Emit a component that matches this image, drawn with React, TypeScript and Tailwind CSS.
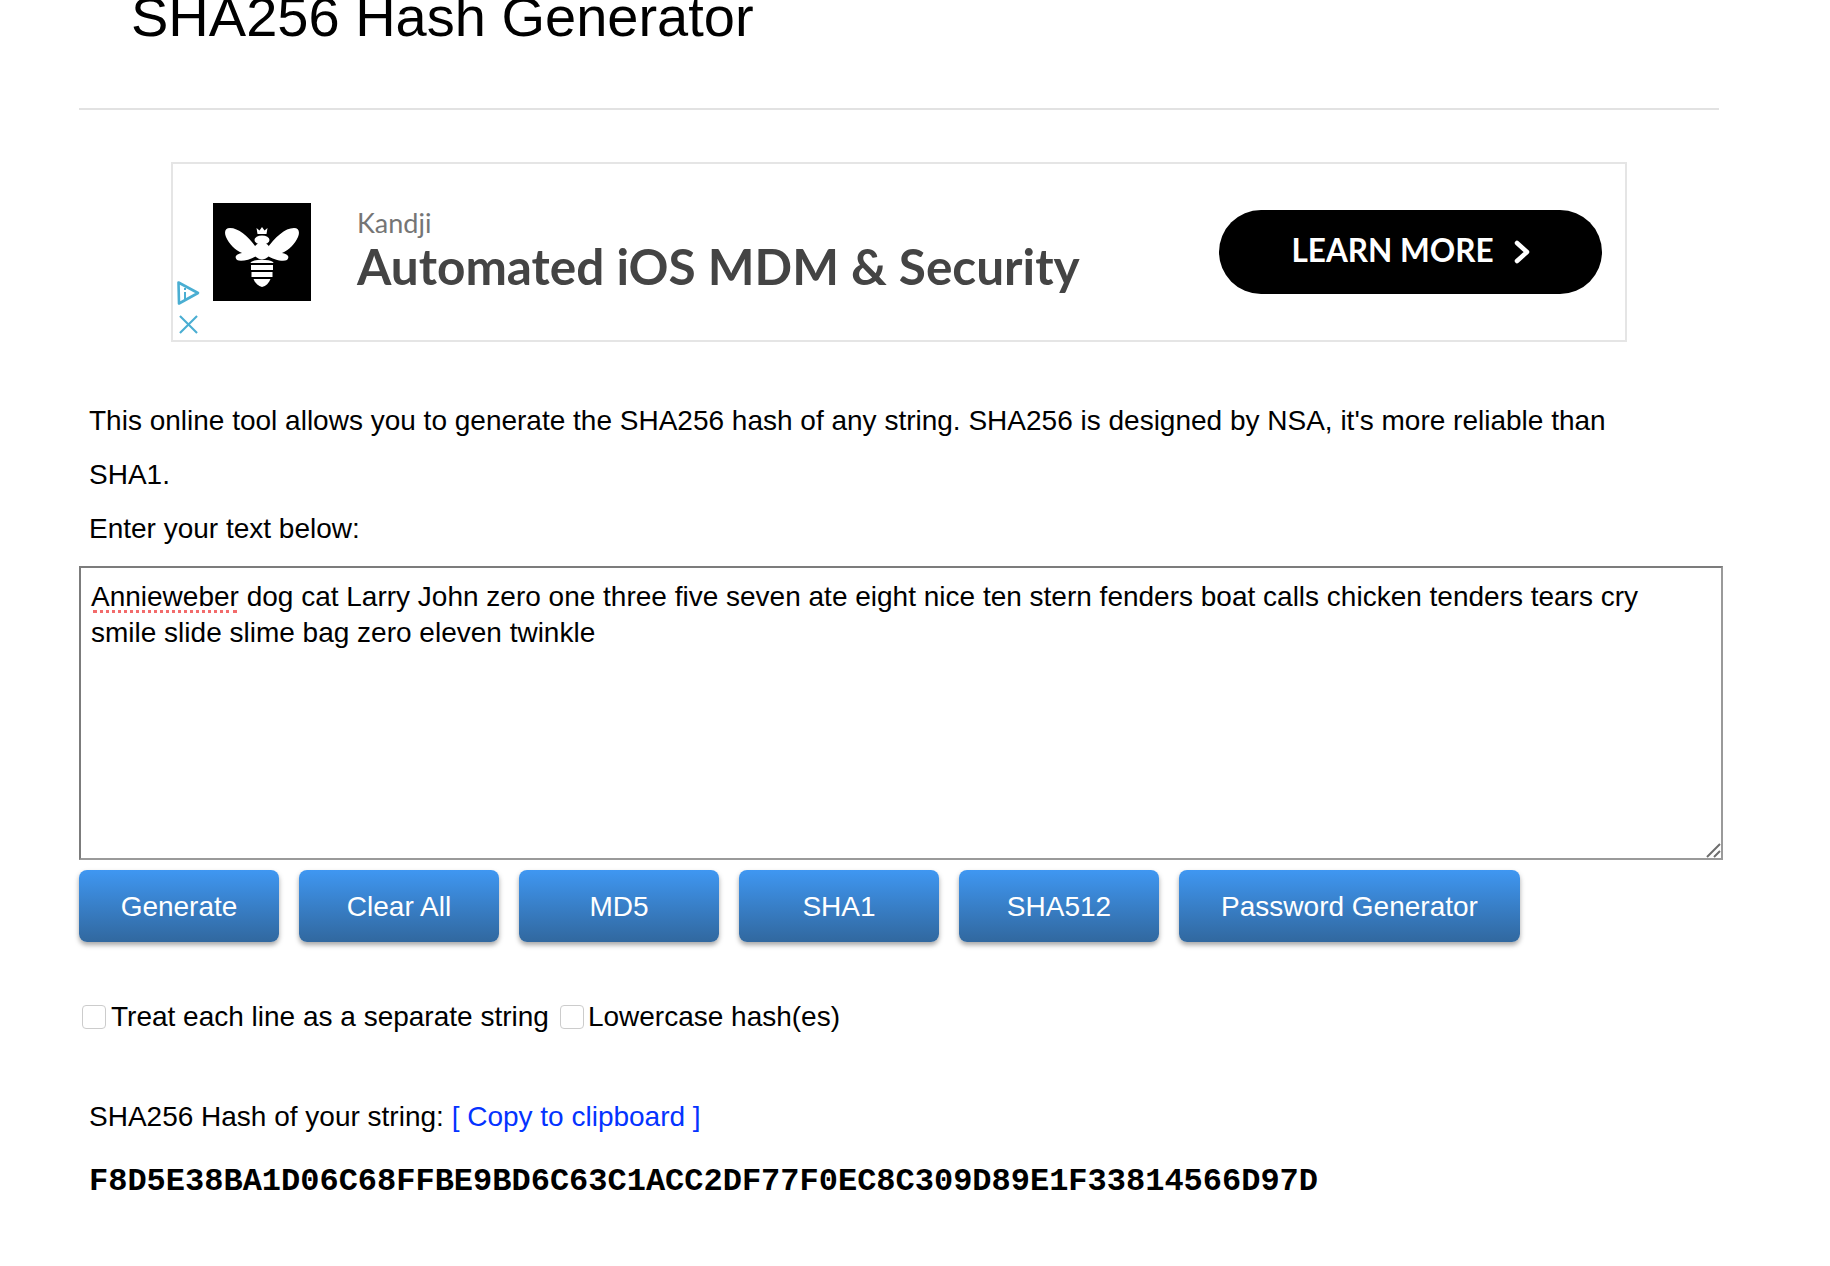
import React from 'react';

const buttons = [
  { label: 'Generate', width: 'w-[200px]' },
  { label: 'Clear All', width: 'w-[200px]' },
  { label: 'MD5', width: 'w-[200px]' },
  { label: 'SHA1', width: 'w-[200px]' },
  { label: 'SHA512', width: 'w-[200px]' },
  { label: 'Password Generator', width: 'w-[341px]' },
];

const text =
  'Annieweber dog cat Larry John zero one three five seven ate eight nice ten stern fenders boat calls chicken tenders tears cry smile slide slime bag zero eleven twinkle';

function Bee() {
  return (
    <svg viewBox="0 0 98 98" className="w-[98px] h-[98px] bg-black shrink-0">
      <g fill="#fff">
        {/* wings */}
        <path d="M45 47 C36 34 26 25 17 25 C12 25 11 29 13 34 C16 41 22 47 29 50 C23 51 21 54 24 57 C28 59 37 57 45 52 Z" />
        <path d="M53 47 C62 34 72 25 81 25 C86 25 87 29 85 34 C82 41 76 47 69 50 C75 51 77 54 74 57 C70 59 61 57 53 52 Z" />
        {/* head and crown */}
        <ellipse cx="49" cy="37" rx="7.5" ry="4.5" />
        <path d="M44.5 31 L43.5 25 L46.5 27.5 L49 24 L51.5 27.5 L54.5 25 L53.5 31 Z" />
        {/* thorax */}
        <circle cx="49" cy="48" r="8.5" />
        {/* stripes */}
        <path d="M38 59 C42 56 56 56 60 59 L60.5 60 L37.5 60 Z" />
        <rect x="38" y="62" width="22" height="5" />
        <rect x="38.5" y="69" width="21" height="5" />
        <path d="M40.5 76 L57.5 76 C56 80 53 83 49 84 C45 83 42 80 40.5 76 Z" />
      </g>
    </svg>
  );
}

function AdChoices() {
  return (
    <div className="absolute left-[3px] bottom-[6px] flex flex-col items-center gap-[9px]">
      <svg viewBox="0 0 24 26" className="w-[24px] h-[26px]" fill="none" stroke="#4aaed2" strokeWidth="2.6">
        <path d="M2.5 2.5 L22 13 L3 23.5 Z" strokeLinejoin="round" />
        <path d="M9 12 V19 M9 8 V10" strokeWidth="2" />
      </svg>
      <svg viewBox="0 0 20 20" className="w-[19px] h-[19px]" fill="none" stroke="#4aaed2" strokeWidth="2.2">
        <path d="M1 1 L19 19 M19 1 L1 19" />
      </svg>
    </div>
  );
}

export default function App() {
  return (
    <div className="w-[1830px] h-[1266px] overflow-hidden bg-white text-black font-['Liberation_Sans',Arial,sans-serif]">
      <div className="pl-[79px] w-[1723px]">
        {/* Header */}
        <h1 className="-mt-[16px] pl-[52px] text-[56px] leading-[66px] font-normal">SHA256 Hash Generator</h1>
        <hr className="mt-[58px] w-[1640px] border-t-2 border-[#e2e2e2]" />

        {/* Ad */}
        <div className="relative mt-[52px] ml-[92px] w-[1456px] h-[180px] border-2 border-[#e5e5e5] flex items-center pl-[40px] pr-[23px] bg-white">
          <Bee />
          <div className="ml-[46px] flex-1 font-['Lato',sans-serif] -mt-[3px]">
            <div className="text-[27px] leading-[30px] text-[#757575]">Kandji</div>
            <div className="text-[49.5px] leading-[56px] font-bold text-[#444444]">Automated iOS MDM &amp; Security</div>
          </div>
          <a className="w-[383px] h-[84px] rounded-full bg-black text-white flex items-center justify-center gap-[20px] text-[31.5px] font-['Lato',sans-serif] font-bold">
            <span className="pb-[2px]">LEARN MORE</span>
            <svg viewBox="0 0 16 24" className="w-[16px] h-[24px]" fill="none" stroke="#fff" strokeWidth="4.5" strokeLinecap="round" strokeLinejoin="round">
              <path d="M3 3 L13 12 L3 21" />
            </svg>
          </a>
          <AdChoices />
        </div>

        {/* Description */}
        <div className="mt-[52px] pl-[10px] text-[28px] leading-[54px]">
          <p className="w-[1560px]">
            This online tool allows you to generate the SHA256 hash of any string. SHA256 is designed by NSA, it's more reliable than SHA1.
          </p>
          <p>Enter your text below:</p>
        </div>

        {/* Input */}
        <div className="relative mt-[10px]">
          <textarea
            spellCheck={false}
            defaultValue={text}
            className="block w-[1644px] h-[294px] border-2 border-t-[#7c7c7c] border-l-[#7c7c7c] border-r-[#9a9a9a] border-b-[#9a9a9a] px-[10px] py-[11px] text-[28px] leading-[36px] outline-none resize-none"
          />
          {/* spell-check squiggle and resize grip */}
          <span className="absolute left-[14px] top-[44px] w-[144px] border-t-[3px] border-dotted border-[#f26b6b]" />
          <svg viewBox="0 0 16 16" className="absolute right-[2px] bottom-[2px] w-[16px] h-[16px]" stroke="#6e6e6e" strokeWidth="2">
            <path d="M2 15 L15 2 M9 15 L15 9" />
          </svg>
        </div>

        <div className="mt-[10px] flex gap-[20px]">
          {buttons.map((b) => (
            <button
              key={b.label}
              className={`${b.width} h-[72px] pt-[1px] rounded-[8px] text-white text-[28px] bg-gradient-to-b from-[#3f97f2] to-[#31689f] shadow-[0_3px_5px_rgba(0,0,0,0.35)]`}
            >
              {b.label}
            </button>
          ))}
        </div>

        {/* Options */}
        <div className="mt-[57px] flex items-center text-[28px] leading-[36px] pl-[3px]">
          <span className="w-[24px] h-[24px] rounded-[4px] border border-[#cccccc] bg-white" />
          <span className="ml-[5px]">Treat each line as a separate string</span>
          <span className="ml-[11px] w-[24px] h-[24px] rounded-[4px] border border-[#cccccc] bg-white" />
          <span className="ml-[4px]">Lowercase hash(es)</span>
        </div>

        {/* Result */}
        <div className="mt-[64px] pl-[10px] text-[28px] leading-[36px]">
          SHA256 Hash of your string: <a className="text-[#0433ff]">[ Copy to clipboard ]</a>
        </div>
        <div className="mt-[29px] pl-[10px] text-[32px] leading-[36px] font-bold font-['Liberation_Mono',monospace]">
          F8D5E38BA1D06C68FFBE9BD6C63C1ACC2DF77F0EC8C309D89E1F33814566D97D
        </div>
      </div>
    </div>
  );
}
